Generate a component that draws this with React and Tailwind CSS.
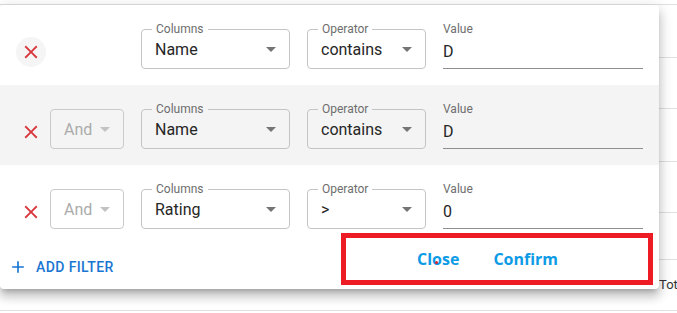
import React from "react";

const ROBOTO = { fontFamily: 'Roboto, "Noto Sans", sans-serif' };

function Caret({ disabled }) {
  return (
    <svg
      viewBox="0 0 24 24"
      className={`absolute right-[7px] top-[8px] h-[24px] w-[24px] ${disabled ? "fill-[#c2c2c2]" : "fill-[#757575]"}`}
    >
      <path d="M7 10l5 5 5-5z" />
    </svg>
  );
}

function XIcon() {
  return (
    <svg viewBox="0 0 24 24" className="h-[22px] w-[22px] fill-[#d9363e]">
      <path d="M19 6.41 17.59 5 12 10.59 6.41 5 5 6.41 10.59 12 5 17.59 6.41 19 12 13.41 17.59 19 19 17.59 13.41 12z" />
    </svg>
  );
}

function Outlined({ label, value, className, disabled }) {
  return (
    <div className={`relative h-[40px] shrink-0 ${className}`}>
      {label ? (
        <fieldset className="pointer-events-none absolute bottom-0 left-0 right-0 top-[-6px] rounded-[4px] border border-[#c4c4c4] pl-[10px] pr-[8px]">
          <legend className="px-[4px] text-[12px] leading-[12px] text-[#6e6e6e]">{label}</legend>
        </fieldset>
      ) : (
        <div className="pointer-events-none absolute inset-0 rounded-[4px] border border-[#cacaca]" />
      )}
      <div
        className={`flex h-full items-center pl-[14px] text-[16px] leading-[23px] ${disabled ? "text-[#ababab]" : "text-[#262626]"}`}
      >
        {value}
      </div>
      <Caret disabled={disabled} />
    </div>
  );
}

function ValueField({ value }) {
  return (
    <div className="relative flex h-[40px] w-[200px] shrink-0 flex-col justify-end border-b border-[#8f8f8f] pb-[5px]">
      <span className="absolute left-0 top-[-6px] text-[12px] leading-[12px] text-[#6e6e6e]">Value</span>
      <div className="text-[16px] leading-[23px] text-[#262626]">{value}</div>
    </div>
  );
}

function FilterRow({ first, column, operator, value, gray }) {
  return (
    <div className={`flex h-[80px] items-start pt-[24px] ${gray ? "bg-[#f4f4f4]" : "bg-white"}`}>
      <div
        className={`ml-[16px] mt-[8px] flex h-[30px] w-[30px] shrink-0 items-center justify-center rounded-full ${first ? "bg-[#f5f5f5]" : ""}`}
      >
        <XIcon />
      </div>
      <div className="ml-[4px]">
        {first ? (
          <div className="h-[40px] w-[74px]" />
        ) : (
          <Outlined value="And" className="w-[74px]" disabled />
        )}
      </div>
      <div className="ml-[17px]">
        <Outlined label="Columns" value={column} className="w-[149px]" />
      </div>
      <div className="ml-[17px]">
        <Outlined label="Operator" value={operator} className="w-[119px]" />
      </div>
      <div className="ml-[17px]">
        <ValueField value={value} />
      </div>
    </div>
  );
}

export default function App() {
  return (
    <div className="relative h-[313px] w-[677px] overflow-hidden bg-white" style={ROBOTO}>
      {/* table behind */}
      <div className="flex flex-col">
        <div className="h-[5px] border-b border-[#e0e0e0]" />
        <div className="h-[53px] border-b border-[#e0e0e0]" />
        <div className="h-[51px] border-b border-[#e0e0e0]" />
        <div className="h-[53px] border-b border-[#e0e0e0]" />
        <div className="h-[51px] border-b border-[#e0e0e0]" />
        <div className="h-[47px] border-b border-[#e0e0e0]" />
        <div className="h-[51px] border-b border-[#e0e0e0] pl-[659px] pt-[15px] text-[13px] leading-[20px] whitespace-nowrap text-[#333]">
          Tot
        </div>
      </div>

      {/* filter panel */}
      <div className="absolute left-0 top-[5px] h-[284px] w-[659px] overflow-hidden rounded-[4px] bg-white shadow-[0px_5px_5px_-3px_rgba(0,0,0,0.2),0px_8px_10px_1px_rgba(0,0,0,0.14),0px_3px_14px_2px_rgba(0,0,0,0.12)]">
        <FilterRow first column="Name" operator="contains" value="D" />
        <FilterRow gray column="Name" operator="contains" value="D" />
        <FilterRow column="Rating" operator=">" value="0" />
        <div className="flex h-[44px] items-center">
          <button className="ml-[8px] flex items-center gap-[8px] text-[14px] font-medium uppercase tracking-[0.4px] text-[#1976d2]">
            <svg viewBox="0 0 24 24" className="h-[20px] w-[20px] fill-[#1976d2]">
              <path d="M19 13h-6v6h-2v-6H5v-2h6V5h2v6h6v2z" />
            </svg>
            Add filter
          </button>
        </div>

        {/* annotation box */}
        <div className="absolute left-[341px] top-[228px] flex h-[52px] w-[312px] items-center border-[5px] border-[#ed1c24] bg-white pl-[71px]">
          <div
            className="flex items-center gap-[34px] text-[16px] font-bold leading-[22px] text-[#0d9be6]"
            style={{ fontFamily: '"Open Sans", "Noto Sans", sans-serif' }}
          >
            <span>Close</span>
            <span>Confirm</span>
          </div>
          <div className="absolute left-[89px] top-[23px] h-[3px] w-[3px] rounded-full bg-[#e0202a]" />
        </div>
      </div>
    </div>
  );
}
